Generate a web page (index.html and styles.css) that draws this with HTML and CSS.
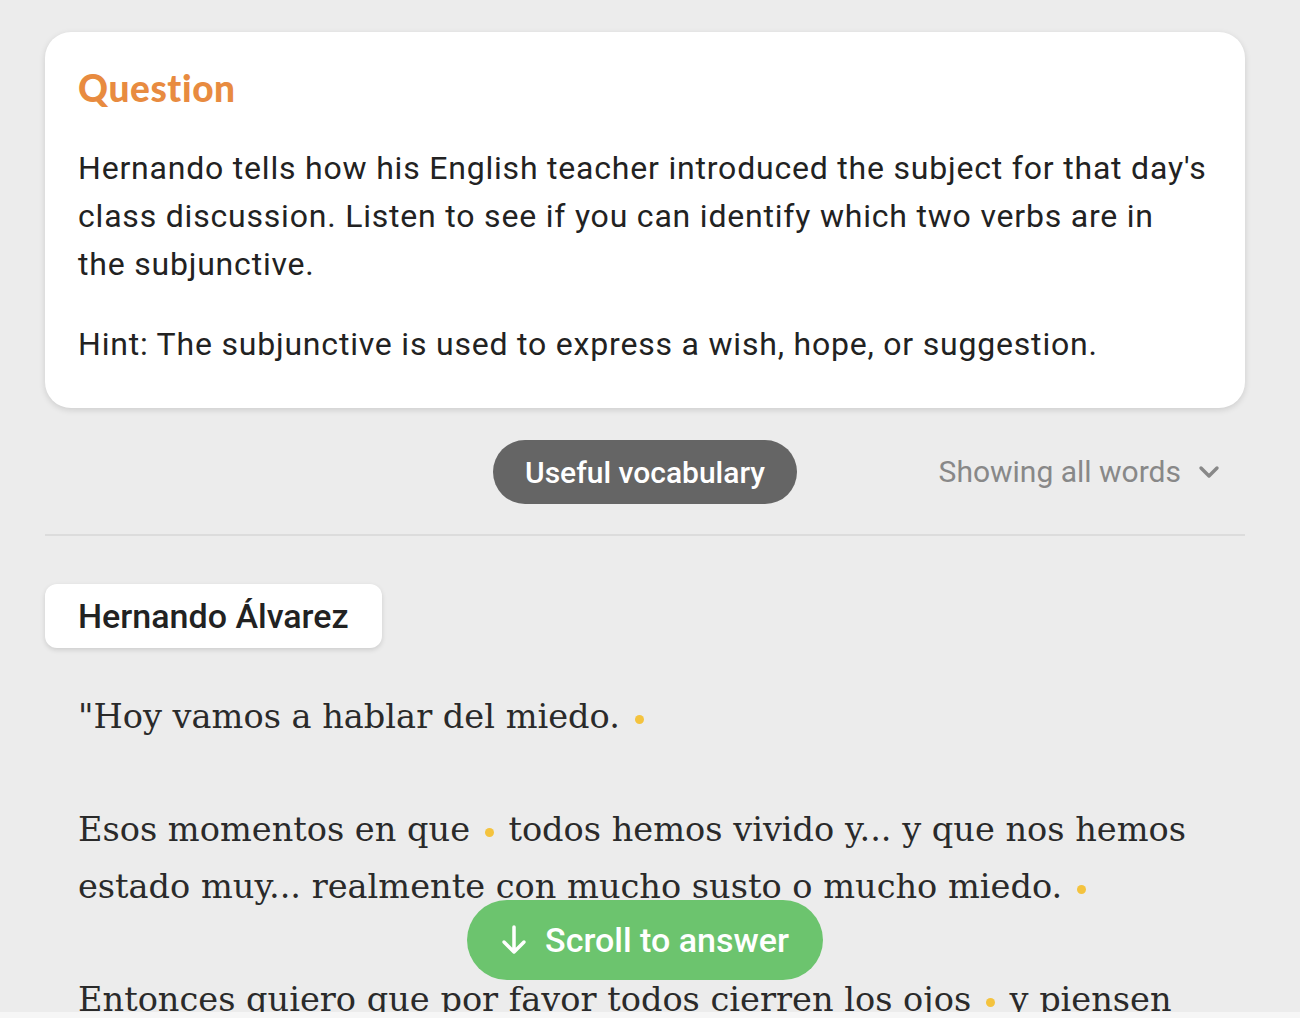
FILE: index.html
```html
<!DOCTYPE html>
<html lang="en">
<head>
    <meta charset="UTF-8">
    <meta name="viewport" content="width=device-width, initial-scale=1.0">
    <title>Listening Exercise</title>
    <link rel="stylesheet" href="styles.css">
</head>
<body>

    <div class="page">
        <!-- Question card -->
        <div class="question-card">
            <h2 class="question-title">Question</h2>
            <p>Hernando tells how his English teacher introduced the subject for that day's class discussion. Listen to see if you can identify which two verbs are in the subjunctive.</p>
            <p>Hint: The subjunctive is used to express a wish, hope, or suggestion.</p>
        </div>

        <!-- Vocabulary toolbar -->
        <div class="vocab-row">
            <button class="vocab-btn">Useful vocabulary</button>
            <div class="vocab-filter">
                Showing all words
                <svg width="24" height="24" viewBox="0 0 24 24"><path d="M4 8l8 8 8-8" fill="none" stroke="#888" stroke-width="3.4" stroke-linecap="round" stroke-linejoin="round"/></svg>
            </div>
        </div>

        <!-- Transcript -->
        <div class="speaker">Hernando Álvarez</div>
        <div class="transcript">
            <p>"Hoy vamos a hablar del miedo. <span class="dot"></span></p>
            <p>Esos momentos en que <span class="dot"></span> todos hemos vivido y... y que nos hemos estado muy... realmente con mucho susto o mucho miedo. <span class="dot"></span></p>
            <p>Entonces quiero que por favor todos cierren los ojos <span class="dot"></span> y piensen en un momento en que tuvieron mucho miedo.</p>
        </div>
    </div>

    <button class="scroll-btn">
        <svg width="26" height="30" viewBox="0 0 26 30"><path d="M13 2v25M3 17l10 10 10-10" fill="none" stroke="#fff" stroke-width="3.5" stroke-linecap="round" stroke-linejoin="round"/></svg>
        Scroll to answer
    </button>
    <div class="bottom-bar"></div>

</body>
</html>
```

FILE: styles.css
```css
/* Base */
html, body {
    margin: 0;
    padding: 0;
    background: #ececec;
    font-family: Roboto, "Noto Sans", sans-serif;
    color: #222;
    overflow: hidden;
}

.page {
    width: 1200px;
    margin-left: 45px;
    padding-top: 32px;
}

/* Question card */
.question-card {
    background: white;
    border-radius: 26px;
    padding: 36px 38px 40px 33px;
    box-shadow: 0px 2px 6px #0002;
}

.question-title {
    margin: 0 0 36px;
    font-family: Lato, sans-serif;
    font-weight: 900;
    font-size: 37px;
    letter-spacing: 0.6px;
    line-height: 40px;
    color: #e88b40;
}

.question-card p {
    margin: 0 0 32px;
    font-size: 32px;
    letter-spacing: 0.8px;
    line-height: 48px;
}

.question-card p:last-child {
    margin-bottom: 0;
}

/* Vocabulary row */
.vocab-row {
    display: flex;
    align-items: center;
    justify-content: center;
    position: relative;
    margin-top: 32px;
    padding-bottom: 30px;
    border-bottom: 2px solid #dcdcdc;
}

.vocab-btn {
    height: 64px;
    padding: 0 32px;
    border: none;
    border-radius: 32px;
    background: #656565;
    color: white;
    font-family: Roboto, sans-serif;
    font-size: 30px;
    font-weight: 500;
}

.vocab-filter {
    position: absolute;
    right: 24px;
    top: 14px;
    display: flex;
    align-items: center;
    gap: 16px;
    font-size: 30px;
    color: #888;
}

/* Speaker tag */
.speaker {
    display: inline-block;
    margin-top: 48px;
    padding: 0 33px;
    height: 64px;
    line-height: 64px;
    background: white;
    border-radius: 12px;
    box-shadow: 0px 2px 5px #0002;
    font-size: 34px;
    font-weight: 500;
}

/* Transcript */
.transcript {
    padding: 40px 33px 0;
    font-family: "DejaVu Serif", serif;
    font-size: 33.6px;
    line-height: 57px;
    color: #2a2a2a;
}

.transcript p {
    margin: 0 0 56px;
}

.dot {
    display: inline-block;
    width: 9px;
    height: 9px;
    border-radius: 50%;
    background: #f4c33e;
    vertical-align: middle;
    margin: 0 4px;
}

/* Floating button */
.scroll-btn {
    position: fixed;
    left: 467px;
    top: 900px;
    width: 356px;
    height: 80px;
    border: none;
    border-radius: 40px;
    background: #6cc46e;
    color: white;
    font-family: Roboto, sans-serif;
    font-size: 34px;
    font-weight: 500;
    display: flex;
    align-items: center;
    justify-content: center;
    gap: 18px;
}

.bottom-bar {
    position: fixed;
    left: 0;
    right: 0;
    bottom: 0;
    height: 6px;
    background: #f6f6f6;
}
```
